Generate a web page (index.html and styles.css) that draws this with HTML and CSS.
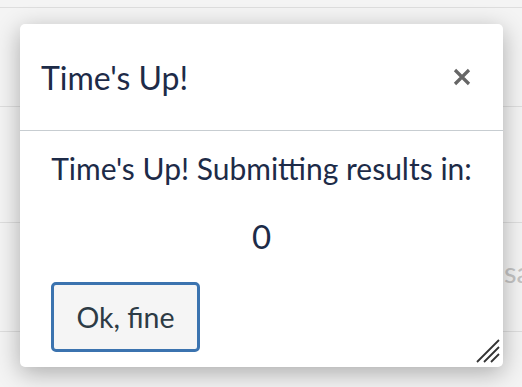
FILE: index.html
```html
<!DOCTYPE html>
<html lang="en">
<head>
  <meta charset="UTF-8" />
  <meta name="viewport" content="width=device-width, initial-scale=1.0"/>
  <title>Time's Up!</title>
  <link rel="stylesheet" href="styles.css">
</head>
<body>

  <div class="page">
    <div class="row row-top"></div>
    <div class="row row-a"></div>
    <div class="row row-b"></div>
    <div class="row row-c"><span class="faint">saved</span></div>
  </div>

  <div class="dialog" role="dialog">
    <div class="dialog-head">
      <h1>Time's Up!</h1>
      <button class="close" aria-label="Close">
        <svg width="18" height="18" viewBox="0 0 18 18">
          <path d="M2 2 L16 16 M16 2 L2 16" stroke="#666" stroke-width="3.2"/>
        </svg>
      </button>
    </div>
    <div class="dialog-body">
      <p class="msg">Time's Up! Submitting results in:</p>
      <p class="count">0</p>
      <button class="btn">Ok, fine</button>
    </div>
    <svg class="grip" width="24" height="24" viewBox="0 0 24 24">
      <path d="M23 1 L1 23 M23 8 L8 23 M23 15 L15 23" stroke="#333" stroke-width="1.8"/>
    </svg>
  </div>

</body>
</html>
```

FILE: styles.css
```css
body {
  margin: 0;
  font-family: "Lato", "Noto Sans", sans-serif;
  background: #f4f4f4;
  height: 387px;
  overflow: hidden;
}

.page {
  display: flex;
  flex-direction: column;
}

.row {
  border-bottom: 1px solid #dedede;
}

.row-top {
  height: 7px;
}

.row-a {
  height: 98px;
}

.row-b {
  height: 115px;
}

.row-c {
  height: 108px;
  display: flex;
  align-items: center;
  padding-left: 504px;
  white-space: nowrap;
  overflow: hidden;
}

.faint {
  color: #c4c4c4;
  font-size: 29px;
  margin-top: -12px;
}

.dialog {
  position: absolute;
  left: 20px;
  top: 24px;
  width: 483px;
  height: 343px;
  background: #fff;
  border-radius: 5px;
  box-shadow: 0 6px 24px rgba(0,0,0,0.3);
  color: #1d2b48;
}

.dialog-head {
  height: 106px;
  border-bottom: 1px solid #c7cdd1;
  display: flex;
  align-items: center;
  justify-content: space-between;
  padding: 0 32px 0 21px;
}

.dialog-head h1 {
  margin: 0;
  font-size: 32px;
  font-weight: normal;
}

.close {
  border: 0;
  background: none;
  padding: 0;
  display: flex;
}

.dialog-body {
  display: flex;
  flex-direction: column;
  align-items: center;
  padding-top: 19px;
}

.msg {
  margin: 0;
  font-size: 30px;
}

.count {
  margin: 30px 0 0;
  font-size: 33px;
}

.btn {
  align-self: flex-start;
  margin: 26px 0 0 31px;
  width: 149px;
  height: 70px;
  background: #f5f5f5;
  border: 3px solid #3b73af;
  border-radius: 5px;
  color: #2d3b45;
  font-family: "Lato", "Noto Sans", sans-serif;
  font-size: 28.5px;
}

.grip {
  position: absolute;
  right: 3px;
  bottom: 4px;
}
```
